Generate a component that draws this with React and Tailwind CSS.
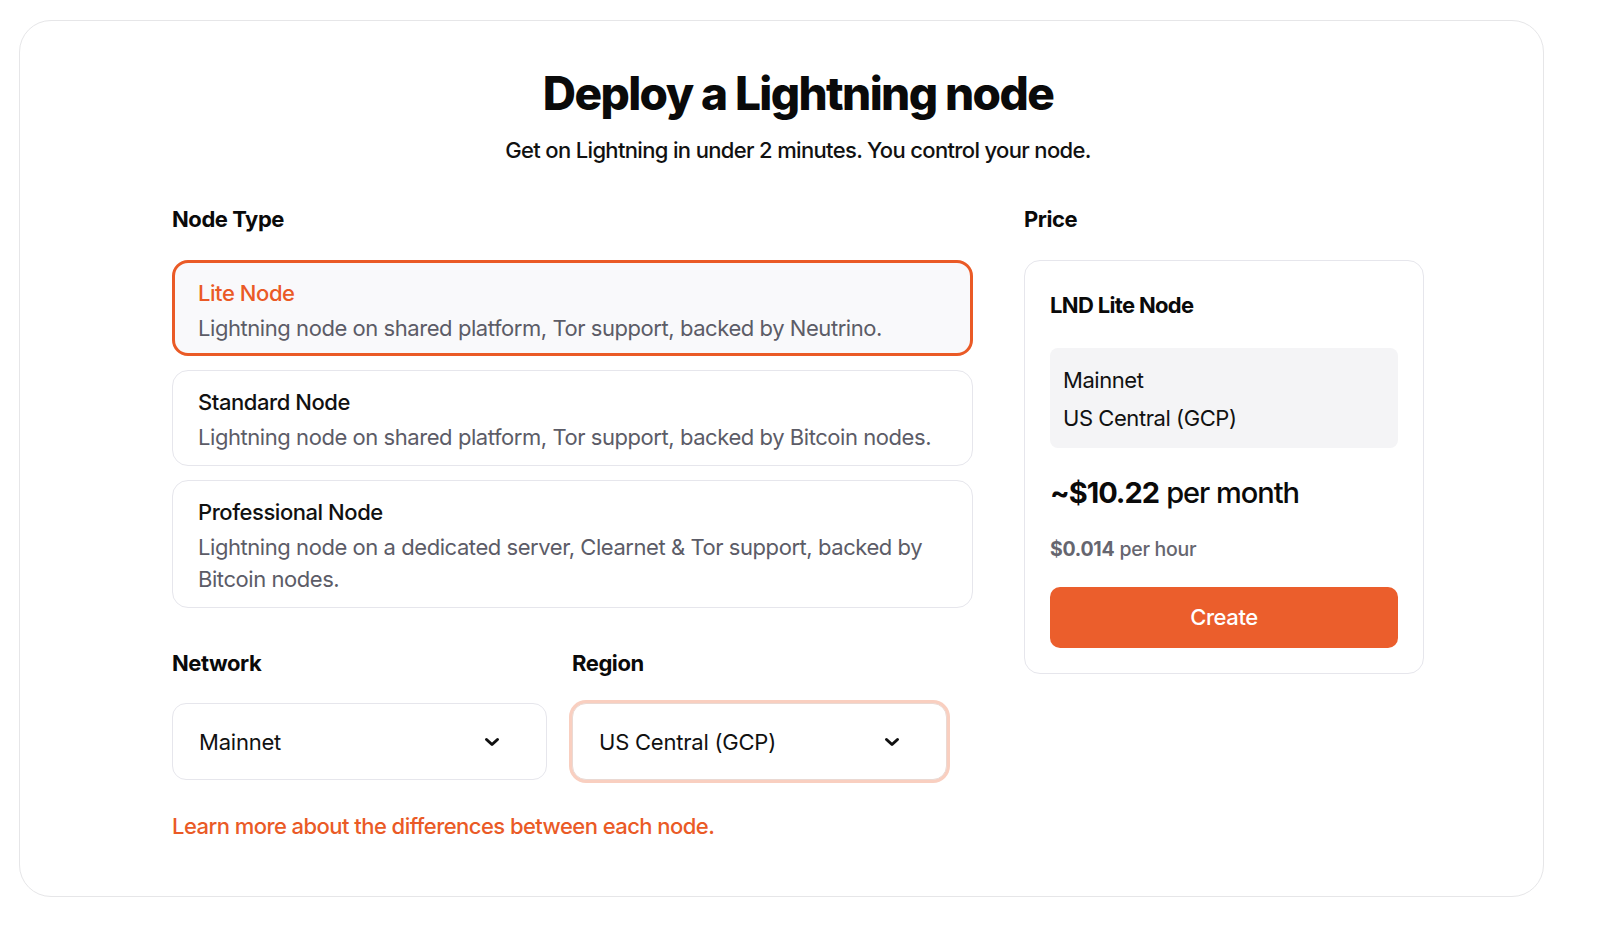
import React, { useState } from "react";

const nodeTypes = [
  {
    id: "lite",
    title: "Lite Node",
    description: "Lightning node on shared platform, Tor support, backed by Neutrino.",
  },
  {
    id: "standard",
    title: "Standard Node",
    description: "Lightning node on shared platform, Tor support, backed by Bitcoin nodes.",
  },
  {
    id: "pro",
    title: "Professional Node",
    description:
      "Lightning node on a dedicated server, Clearnet & Tor support, backed by Bitcoin nodes.",
  },
];

const Chevron = () => (
  <svg width="16" height="10" viewBox="0 0 16 10" fill="none">
    <path
      d="M2.5 2.5 L8 7.5 L13.5 2.5"
      stroke="#111"
      strokeWidth="3"
      strokeLinecap="round"
      strokeLinejoin="round"
    />
  </svg>
);

const SelectBox = ({ value, focused }) => (
  <div
    className={`h-[77px] flex items-center justify-between pl-[26px] pr-[46px] rounded-[14px] border bg-white ${
      focused ? "border-[#ead9d3] ring-[3px] ring-[#f9cfc0]" : "border-[#e6e6ec]"
    }`}
  >
    <span className="text-[22px] leading-8 text-[#111] tracking-[-0.01em]">{value}</span>
    <Chevron />
  </div>
);

export default function App() {
  const [selected, setSelected] = useState("lite");

  return (
    <div
      className="min-h-screen bg-white"
      style={{ fontFamily: "Inter, 'Noto Sans', sans-serif" }}
    >
      <div className="ml-[19px] pt-[20px] w-[1525px]">
        <div className="h-[877px] rounded-[32px] border border-[#e6e6e8] bg-white pl-[152px] pt-[44px]">
          <div className="w-[1252px]">
            <h1 className="text-center text-[46px] leading-[56px] font-extrabold tracking-[-0.035em] text-[#0a0a0a]">
              Deploy a Lightning node
            </h1>
            <p className="mt-[13px] text-center text-[22px] leading-8 font-medium tracking-[-0.03em] text-[#111]">
              Get on Lightning in under 2 minutes. You control your node.
            </p>

            <div className="mt-[37px] flex gap-[51px]">
              {/* left column */}
              <div className="w-[801px]">
                <div className="text-[22px] leading-8 font-bold tracking-[-0.02em] text-[#0a0a0a]">
                  Node Type
                </div>
                <div className="mt-[25px] flex flex-col gap-[14px]">
                  {nodeTypes.map((n) => {
                    const active = n.id === selected;
                    return (
                      <button
                        key={n.id}
                        onClick={() => setSelected(n.id)}
                        className={`text-left rounded-[16px] ${
                          active
                            ? "border-[3px] border-[#ea5a26] bg-[#f9f9fb] pt-[14px] pb-[9px] pl-[23px] pr-[20px]"
                            : "border border-[#e6e6ec] bg-white pt-[15px] pb-[12px] pl-[25px] pr-[22px]"
                        }`}
                      >
                        <div
                          className={`text-[22px] leading-8 font-medium tracking-[-0.02em] ${
                            active ? "text-[#ea5a26]" : "text-[#111]"
                          }`}
                        >
                          {n.title}
                        </div>
                        <div className="mt-[3px] text-[22px] leading-8 tracking-[-0.02em] text-[#5c5c67]">
                          {n.description}
                        </div>
                      </button>
                    );
                  })}
                </div>

                <div className="mt-[39px] grid grid-cols-[375px_375px] gap-x-[25px]">
                  <div>
                    <div className="text-[22px] leading-8 font-bold tracking-[-0.02em] text-[#0a0a0a]">
                      Network
                    </div>
                    <div className="mt-[24px]">
                      <SelectBox value="Mainnet" />
                    </div>
                  </div>
                  <div>
                    <div className="text-[22px] leading-8 font-bold tracking-[-0.02em] text-[#0a0a0a]">
                      Region
                    </div>
                    <div className="mt-[24px]">
                      <SelectBox value="US Central (GCP)" focused />
                    </div>
                  </div>
                </div>

                <a
                  href="#"
                  className="mt-[30px] block text-[22px] leading-8 font-medium tracking-[-0.025em] text-[#ea5a26]"
                >
                  Learn more about the differences between each node.
                </a>
              </div>

              {/* right column */}
              <div className="w-[400px]">
                <div className="text-[22px] leading-8 font-bold tracking-[-0.02em] text-[#0a0a0a]">
                  Price
                </div>
                <div className="mt-[25px] rounded-[16px] border border-[#e6e6ec] bg-white px-[25px] pt-[28px] pb-[25px]">
                  <div className="text-[22px] leading-8 font-bold tracking-[-0.03em] text-[#0a0a0a]">
                    LND Lite Node
                  </div>
                  <div className="mt-[27px] rounded-[8px] bg-[#f4f4f6] px-[13px] pt-[16px] pb-[14px] flex flex-col gap-[6px]">
                    <div className="text-[22px] leading-8 tracking-[-0.02em] text-[#111]">Mainnet</div>
                    <div className="text-[22px] leading-8 tracking-[-0.02em] text-[#111]">
                      US Central (GCP)
                    </div>
                  </div>
                  <div className="mt-[25px] text-[29px] leading-[40px] tracking-[-0.035em] text-[#0a0a0a]">
                    <span className="font-bold">~$10.22</span>{" "}
                    <span className="font-medium">per month</span>
                  </div>
                  <div className="mt-[22px] text-[19.5px] leading-7 tracking-[-0.015em] text-[#66666f]">
                    <span className="font-bold">$0.014</span> <span className="font-medium">per hour</span>
                  </div>
                  <button className="mt-[24px] w-full h-[61px] rounded-[10px] bg-[#eb5e2c] text-white text-[22px] font-medium tracking-[-0.02em]">
                    Create
                  </button>
                </div>
              </div>
            </div>
          </div>
        </div>
      </div>
    </div>
  );
}
